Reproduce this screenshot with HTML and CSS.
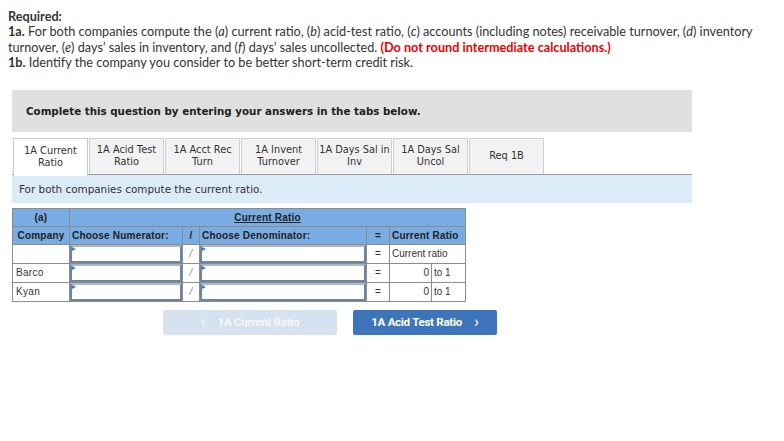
FILE: index.html
```html
<!DOCTYPE html>
<html>
<head>
<meta charset="utf-8">
<link rel="stylesheet" href="styles.css">
</head>
<body>
<div class="req">
  <p class="req-title">Required:</p>
  <p><b>1a.</b> For both companies compute the (<i>a</i>) current ratio, (<i>b</i>) acid-test ratio, (<i>c</i>) accounts (including notes) receivable turnover, (<i>d</i>) inventory<br>turnover, (<i>e</i>) days’ sales in inventory, and (<i>f</i>) days’ sales uncollected. <b class="red">(Do not round intermediate calculations.)</b></p>
  <p><b>1b.</b> Identify the company you consider to be better short-term credit risk.</p>
</div>

<div class="panel">Complete this question by entering your answers in the tabs below.</div>

<div class="tabs">
  <div class="tab active">1A Current<br>Ratio</div>
  <div class="tab">1A Acid Test<br>Ratio</div>
  <div class="tab">1A Acct Rec<br>Turn</div>
  <div class="tab">1A Invent<br>Turnover</div>
  <div class="tab">1A Days Sal in<br>Inv</div>
  <div class="tab">1A Days Sal<br>Uncol</div>
  <div class="tab">Req 1B</div>
</div>

<div class="instr">For both companies compute the current ratio.</div>

<table class="grid">
  <colgroup>
    <col class="w-co">
    <col class="w-num">
    <col class="w-sl">
    <col class="w-den">
    <col class="w-eq">
    <col class="w-val">
    <col class="w-to">
  </colgroup>
  <tr class="hd">
    <td class="center">(a)</td>
    <td colspan="6" class="center"><u>Current Ratio</u></td>
  </tr>
  <tr class="hd">
    <td class="center">Company</td>
    <td>Choose Numerator:</td>
    <td class="center">/</td>
    <td>Choose Denominator:</td>
    <td class="center">=</td>
    <td colspan="2">Current Ratio</td>
  </tr>
  <tr>
    <td></td>
    <td class="inp"><div class="box"></div></td>
    <td class="center op">/</td>
    <td class="inp"><div class="box"></div></td>
    <td class="center">=</td>
    <td colspan="2">Current ratio</td>
  </tr>
  <tr>
    <td class="name">Barco</td>
    <td class="inp"><div class="box"></div></td>
    <td class="center op">/</td>
    <td class="inp"><div class="box"></div></td>
    <td class="center">=</td>
    <td class="num">0</td>
    <td>to 1</td>
  </tr>
  <tr>
    <td class="name">Kyan</td>
    <td class="inp"><div class="box"></div></td>
    <td class="center op">/</td>
    <td class="inp"><div class="box"></div></td>
    <td class="center">=</td>
    <td class="num">0</td>
    <td>to 1</td>
  </tr>
</table>

<div class="nav">
  <div class="btn prev"><span class="chev">‹</span>1A Current Ratio</div>
  <div class="btn next">1A Acid Test Ratio<span class="chev">›</span></div>
</div>
</body>
</html>
```

FILE: styles.css
```css
html, body {
  margin: 0;
  padding: 0;
  background: #fff;
}
body {
  padding: 9px 8px 0 8px;
  width: 768px;
}
.req {
  font-family: Lato, "Open Sans", "Liberation Sans", sans-serif;
  font-size: 12.7px;
  line-height: 15.4px;
  color: #333;
  white-space: nowrap;
}
.req p {
  margin: 0;
}
.req-title {
  font-weight: bold;
}
.req b {
  font-weight: bold;
}
.red {
  color: #e00;
}

.panel {
  margin: 19px 0 0 4px;
  width: 666px;
  height: 42px;
  padding-left: 14px;
  background: #e0e0e0;
  font-family: "DejaVu Sans", Verdana, sans-serif;
  font-weight: bold;
  font-size: 10.3px;
  color: #222;
  display: flex;
  align-items: center;
}

.tabs {
  margin: 6px 0 0 4px;
  width: 680px;
  display: flex;
  gap: 1px;
  padding-left: 1px;
  box-sizing: border-box;
  border-bottom: 1px solid #a0a0a0;
  height: 37px;
}
.tab {
  width: 73px;
  height: 35px;
  border: 1px solid #cfcfcf;
  border-bottom: none;
  background: #f2f2f2;
  font-family: "DejaVu Sans", Verdana, sans-serif;
  font-size: 9.8px;
  line-height: 12px;
  color: #333;
  text-align: center;
  display: flex;
  align-items: center;
  justify-content: center;
}
.tab.active {
  background: #fff;
  height: 37px;
  margin-bottom: -1px;
  border-color: #c8c8c8;
}

.instr {
  margin-left: 4px;
  width: 673px;
  height: 28px;
  padding-left: 7px;
  background: #dcebf8;
  font-family: "DejaVu Sans", Verdana, sans-serif;
  font-size: 10.4px;
  color: #333;
  display: flex;
  align-items: center;
}

.grid {
  margin: 5px 0 0 4px;
  border-collapse: collapse;
  table-layout: fixed;
  width: 453px;
  font-family: "Liberation Sans", Arial, sans-serif;
  font-size: 10px;
  color: #333;
}
.w-co { width: 57px; }
.w-num { width: 113px; }
.w-sl { width: 17px; }
.w-den { width: 167px; }
.w-eq { width: 23px; }
.w-val { width: 42px; }
.w-to { width: 34px; }

.grid td {
  border: 1px solid #8c8c8c;
  padding: 0 2px;
  height: 17px;
  text-align: left;
  white-space: nowrap;
  overflow: hidden;
}
.grid tr.hd td {
  background: #78ace2;
  font-weight: bold;
  color: #222;
  letter-spacing: 0.2px;
}
.grid td.center {
  text-align: center;
}
.grid td.name {
  padding-left: 3px;
  letter-spacing: 0.3px;
}
.grid td.op {
  font-style: italic;
  color: #888;
}
.grid td.inp {
  padding: 0;
  height: 18px;
}
.box {
  position: relative;
  height: 14px;
  border: 2px solid #6d84a6;
  border-top-color: #a9b7cb;
  background: #fff;
}
.box::before {
  content: "";
  position: absolute;
  left: 0;
  top: 0;
  border-left: 4px solid #3a7ad0;
  border-top: 2px solid transparent;
  border-bottom: 2px solid transparent;
}
.grid td.num {
  text-align: right;
}

.nav {
  margin: 8px 0 0 155px;
  display: flex;
  gap: 16px;
}
.btn {
  height: 25px;
  border-radius: 2px;
  font-family: "Roboto", "Liberation Sans", sans-serif;
  font-weight: bold;
  font-size: 11.6px;
  color: #fff;
  display: flex;
  align-items: center;
  justify-content: center;
  letter-spacing: -0.3px;
}
.btn .chev {
  font-size: 17px;
  font-weight: normal;
  margin: -3px 12px 0;
}
.btn.prev {
  width: 174px;
  background: #d7e2f0;
  color: #f4f7fb;
}
.btn.prev .chev {
  margin: -3px 12px 0 0;
}
.btn.next {
  width: 144px;
  background: #3c75b9;
}
.btn.next .chev {
  margin: -3px 0 0 12px;
}
```
